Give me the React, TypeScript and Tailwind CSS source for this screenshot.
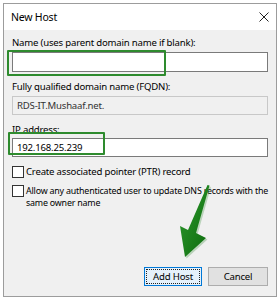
import React from "react";

const font = { fontFamily: '"Noto Sans", "Open Sans", "Liberation Sans", sans-serif' };

function Arrow() {
  return (
    <svg className="absolute left-[176px] top-[182px]" width="40" height="80" viewBox="176 182 40 80">
      <defs>
        <linearGradient id="g" x1="0" y1="0" x2="1" y2="1">
          <stop offset="0" stopColor="#2f9a2f" />
          <stop offset="1" stopColor="#0b6a0b" />
        </linearGradient>
      </defs>
      <polygon
        points="207.5,185 209.5,185.5 196,233 206,238 185,257 180,226 188,230"
        fill="url(#g)"
        opacity="0.25"
        transform="translate(1.5,1.5)"
      />
      <polygon points="207.5,185 209.5,185.5 196,233 206,238 185,257 180,226 188,230" fill="url(#g)" />
    </svg>
  );
}

export default function App() {
  return (
    <div
      className="relative w-[280px] h-[300px] bg-white p-[3px] text-[9.6px] leading-[14px] tracking-[-0.2px] text-black"
      style={font}
    >
      <div className="flex flex-col h-[294px] border border-[#9c9c9c] bg-[#f0f0f0]">
        {/* Title bar */}
        <div className="flex items-center justify-between h-[26px] bg-white pl-[7px] pr-[6px] text-[10.5px]">
          <span>New Host</span>
          <svg width="12" height="12" viewBox="0 0 12 12">
            <path d="M1.5 1.5 L10.5 10.5 M10.5 1.5 L1.5 10.5" stroke="#222" strokeWidth="1" />
          </svg>
        </div>

        <div className="flex flex-col flex-1 pl-[8px] pr-[8px]">
          {/* Name */}
          <div className="mt-[6px]">Name (uses parent domain name if blank):</div>
          <div className="mt-[2px] h-[20px] bg-white border border-[#7a7a7a]" />

          {/* FQDN */}
          <div className="mt-[8px]">Fully qualified domain name (FQDN):</div>
          <div className="mt-[2px] h-[19px] border border-[#c8c8c8] bg-[#f0f0f0] pl-[4px] flex items-center text-[#333]">
            RDS-IT.Mushaaf.net.
          </div>

          {/* IP */}
          <div className="mt-[8px]">IP address:</div>
          <div className="mt-[1px] h-[19px] bg-white border border-[#7a7a7a] pl-[4px] flex items-center">
            192.168.25.239
          </div>

          {/* Checkboxes */}
          <label className="mt-[8px] flex items-center gap-[2px]">
            <span className="w-[12px] h-[12px] border border-[#333] bg-white shrink-0" />
            <span>Create associated pointer (PTR) record</span>
          </label>
          <label className="mt-[5px] flex items-start gap-[2px]">
            <span className="mt-[1px] w-[12px] h-[12px] border border-[#333] bg-white shrink-0" />
            <span className="text-[8.9px] leading-[11.5px] pt-[1px] whitespace-nowrap tracking-[-0.2px]">
              Allow any authenticated user to update DNS records with the
              <br />
              same owner name
            </span>
          </label>

          {/* Buttons */}
          <div className="mt-auto mb-[10px] flex justify-end gap-[6px]">
            <button className="w-[58px] h-[19px] border border-[#0078d7] bg-[#e5f1fb] p-[1px] text-[9.6px]">
              <span className="flex items-center justify-center w-full h-full border border-dotted border-[#222]">
                Add Host
              </span>
            </button>
            <button className="w-[60px] h-[19px] border border-[#adadad] bg-[#e1e1e1] text-[9.6px]">Cancel</button>
          </div>
        </div>
      </div>

      {/* Green highlight boxes */}
      <div className="absolute left-[7px] top-[50px] w-[159px] h-[26px] border-2 border-[#2e8b2e] rounded-[1px]" />
      <div className="absolute left-[8px] top-[132px] w-[97px] h-[23px] border-2 border-[#2e8b2e] rounded-[1px]" />

      <Arrow />
    </div>
  );
}
